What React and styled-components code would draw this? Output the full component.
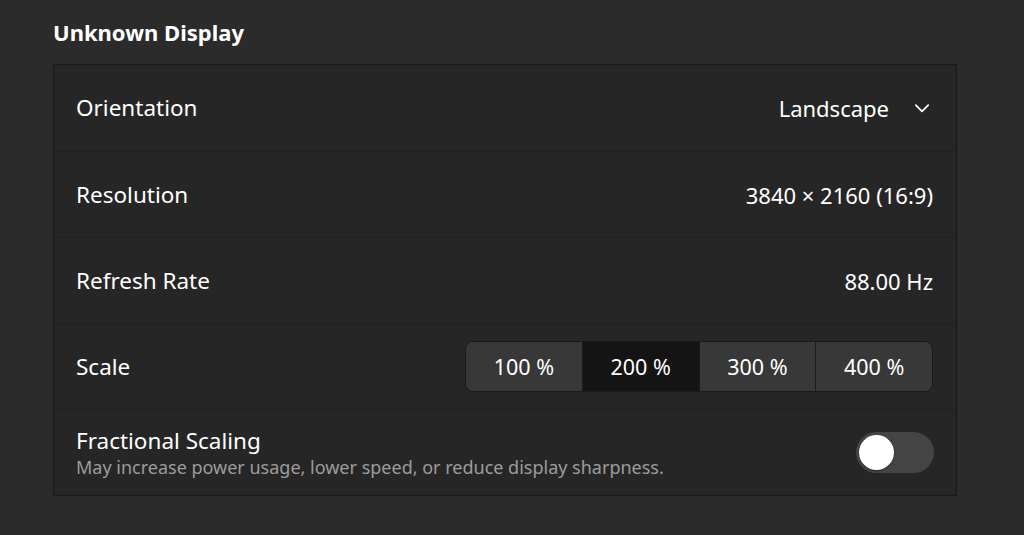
import React, { useState } from 'react';
import styled, { createGlobalStyle } from 'styled-components';

const GlobalStyle = createGlobalStyle`
  html, body {
    margin: 0;
    padding: 0;
    background: #2b2b2b;
    font-family: "Noto Sans", "Open Sans", sans-serif;
    color: #ffffff;
  }
`;

const Page = styled.div`
  width: 1024px;
  height: 535px;
  box-sizing: border-box;
  padding: 17px 67px 0 53px;
`;

const Title = styled.h2`
  margin: 0 0 17px 0;
  font-size: 22px;
  font-weight: 700;
  line-height: 30px;
  color: #ffffff;
`;

const Card = styled.div`
  background: #262626;
  border: 1px solid #191919;
  display: flex;
  flex-direction: column;
`;

const Row = styled.div`
  height: 86px;
  box-sizing: border-box;
  display: flex;
  align-items: center;
  justify-content: space-between;
  padding: 0 22px 0 22px;
  border-top: ${p => (p.$first ? 'none' : '1px solid #212121')};
`;

const Label = styled.div`
  font-size: 22.5px;
  line-height: 28px;
  color: #ffffff;
`;

const LabelStack = styled.div`
  display: flex;
  flex-direction: column;
`;

const Sub = styled.div`
  font-size: 18px;
  line-height: 24px;
  color: #9c9c9c;
`;

const Value = styled.div`
  font-size: 22px;
  color: #ffffff;
  display: flex;
  align-items: center;
  gap: ${p => (p.$dropdown ? '24px' : '0')};
  padding-right: ${p => (p.$dropdown ? '3px' : '1px')};
`;

const Segmented = styled.div`
  display: flex;
  width: 468px;
  height: 51px;
  box-sizing: border-box;
  border: 1px solid #1a1a1a;
  border-radius: 8px;
  overflow: hidden;
  margin-right: 1px;
`;

const SegButton = styled.button`
  flex: 1;
  border: none;
  border-left: ${p => (p.$first ? 'none' : '1px solid #1c1c1c')};
  background: ${p => (p.$active ? '#141414' : '#383838')};
  color: #ffffff;
  font-family: inherit;
  font-size: 21.5px;
  padding: 0;
  cursor: pointer;
`;

const Switch = styled.button`
  width: 78px;
  height: 41px;
  border-radius: 21px;
  border: none;
  background: #454545;
  padding: 3px;
  display: flex;
  align-items: center;
  justify-content: ${p => (p.$on ? 'flex-end' : 'flex-start')};
  cursor: pointer;
`;

const Knob = styled.span`
  width: 35px;
  height: 35px;
  border-radius: 50%;
  background: #ffffff;
  box-shadow: 0 1px 2px rgba(0, 0, 0, 0.4);
`;

const Chevron = () => (
  <svg width="18" height="18" viewBox="0 0 16 16" fill="none">
    <path d="M2.5 5.5l5.5 5.5 5.5-5.5" stroke="#ffffff" strokeWidth="1.5" strokeLinecap="round" strokeLinejoin="round" />
  </svg>
);

const scales = ['100 %', '200 %', '300 %', '400 %'];

export default function App() {
  const [scale, setScale] = useState(1);
  const [fractional, setFractional] = useState(false);

  return (
    <>
      <GlobalStyle />
      <Page>
        <Title>Unknown Display</Title>
        <Card>
          <Row $first>
            <Label>Orientation</Label>
            <Value $dropdown>
              Landscape
              <Chevron />
            </Value>
          </Row>
          <Row>
            <Label>Resolution</Label>
            <Value>3840 × 2160 (16:9)</Value>
          </Row>
          <Row>
            <Label>Refresh Rate</Label>
            <Value>88.00 Hz</Value>
          </Row>
          <Row>
            <Label>Scale</Label>
            <Segmented>
              {scales.map((s, i) => (
                <SegButton key={s} $first={i === 0} $active={i === scale} onClick={() => setScale(i)}>
                  {s}
                </SegButton>
              ))}
            </Segmented>
          </Row>
          <Row>
            <LabelStack>
              <Label>Fractional Scaling</Label>
              <Sub>May increase power usage, lower speed, or reduce display sharpness.</Sub>
            </LabelStack>
            <Switch $on={fractional} onClick={() => setFractional(!fractional)}>
              <Knob />
            </Switch>
          </Row>
        </Card>
      </Page>
    </>
  );
}
